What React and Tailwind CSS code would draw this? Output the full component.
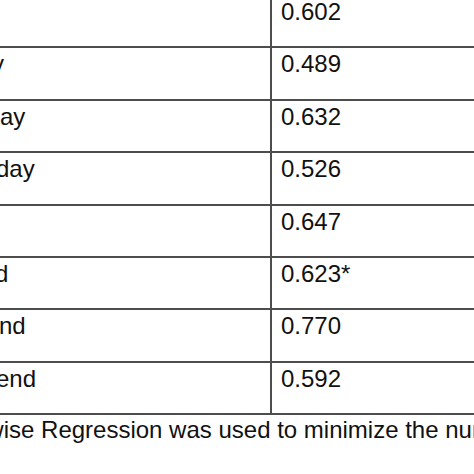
import React from 'react';

const rows = [
  { label: '', shift: 'ml-0', value: '0.602' },
  { label: 'y', shift: 'ml-[-8px]', value: '0.489' },
  { label: 'ay', shift: 'ml-0', value: '0.632' },
  { label: 'day', shift: 'ml-[-4px]', value: '0.526' },
  { label: '', shift: 'ml-0', value: '0.647' },
  { label: 'd', shift: 'ml-[-5px]', value: '0.623*' },
  { label: 'nd', shift: 'ml-[-1px]', value: '0.770' },
  { label: 'end', shift: 'ml-[-4px]', value: '0.592' },
];

export default function App() {
  return (
    <div
      className="w-[474px] h-[474px] overflow-hidden bg-white text-[#111] text-[24px] leading-[1.15]"
      style={{ fontFamily: '"Liberation Sans", Arial, sans-serif' }}
    >
      <div className="mt-[-4px] w-[520px]">
        {rows.map((r, i) => (
          <div key={i} className="flex h-[52.4px] border-b-2 border-[#4d4d4d]">
            <div className="w-[270px] pt-[2px] overflow-hidden whitespace-nowrap">
              <span className={`inline-block ${r.shift}`}>{r.label}</span>
            </div>
            <div className="flex-1 border-l-2 border-[#4d4d4d] pl-[9px] pt-[2px]">{r.value}</div>
          </div>
        ))}
      </div>
      <p className="mt-[1px] ml-[-63px] whitespace-nowrap">
        Stepwise Regression was used to minimize the number of variables
      </p>
    </div>
  );
}
